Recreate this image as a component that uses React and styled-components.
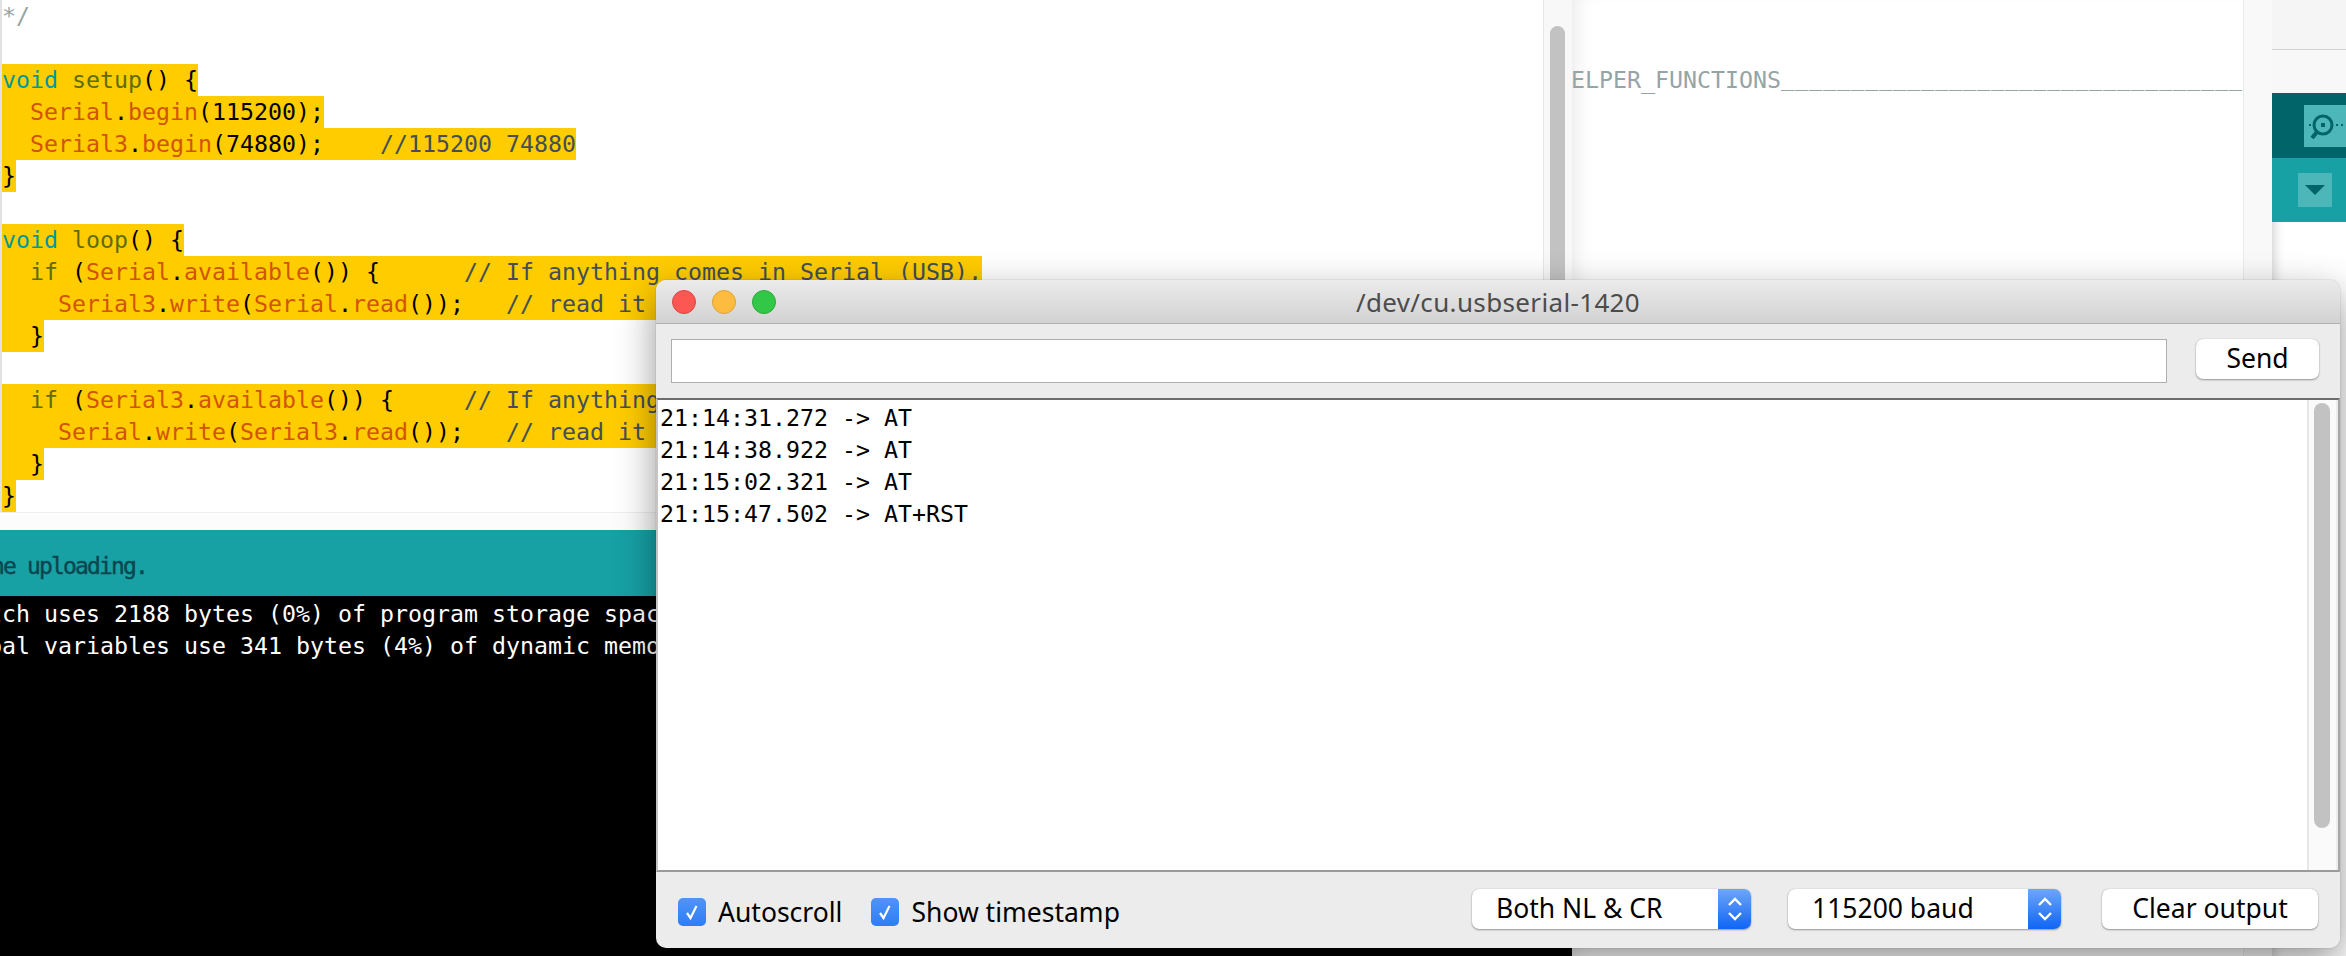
import styled, { createGlobalStyle } from "styled-components";

const Global = createGlobalStyle`
  html, body {
    margin: 0;
    padding: 0;
    background: #fff;
  }
`;

const MONO = `"DejaVu Sans Mono", "Liberation Mono", monospace`;
const UI = `"Noto Sans", "Open Sans", sans-serif`;

const Desktop = styled.div`
  position: relative;
  display: flex;
  width: 2346px;
  height: 956px;
  overflow: hidden;
  background: #fff;
`;

// left part of the IDE
const IdeColumn = styled.div`
  width: 1572px;
  flex-shrink: 0;
  display: flex;
  flex-direction: column;
`;

const EditorRow = styled.div`
  display: flex;
  height: 512px;
  flex-shrink: 0;
  border-bottom: 1px solid #eeeeee;
`;

const CodeArea = styled.div`
  flex: 1;
  min-width: 0;
  overflow: hidden;
  border-left: 2px solid #e2e2e2;
  font-family: ${MONO};
  font-size: 23.25px;
  line-height: 32px;
  color: #000;
`;

const Line = styled.div`
  width: fit-content;
  height: 32px;
  white-space: pre;
  background: ${(p) => (p.$on ? "#ffcc00" : "transparent")};
`;

const Kw = styled.span`
  color: #00979c;
`;
const Fn = styled.span`
  color: #5e6d03;
`;
const Obj = styled.span`
  color: #d35400;
`;
const Cm = styled.span`
  color: #434f54;
`;
const GreyCm = styled.span`
  color: #95a5a6;
`;

const ScrollGutter = styled.div`
  width: 29px;
  flex-shrink: 0;
  box-sizing: border-box;
  background: #f8f8f8;
  border-left: 1px solid #e6e6e6;
  padding: 26px 7px 0 6px;
`;

const ScrollThumb = styled.div`
  height: 700px;
  background: #c2c2c2;
  border-radius: 8px;
`;

const EditorFoot = styled.div`
  height: 17px;
  flex-shrink: 0;
  background: #fcfcfc;
`;

const StatusBar = styled.div`
  height: 66px;
  flex-shrink: 0;
  display: flex;
  align-items: center;
  overflow: hidden;
  background: #17a1a5;
  color: #0a4650;
  font-family: ${MONO};
  font-size: 23px;
  letter-spacing: -1.85px;
  white-space: pre;
`;

const StatusText = styled.div`
  margin: 6px 0 0 -33px;
  -webkit-text-stroke: 0.4px #0a4650;
`;

const Console = styled.div`
  flex: 1;
  background: #000;
  color: #fff;
  padding-top: 2px;
  overflow: hidden;
  font-family: ${MONO};
  font-size: 23.25px;
  line-height: 32px;
  white-space: pre;
`;

const ConsoleLine = styled.div`
  margin-left: -54px;
`;

// second editor window between the two IDE parts
const MidPane = styled.div`
  width: 700px;
  flex-shrink: 0;
  display: flex;
  background: #fff;
  box-shadow: inset 16px 0 22px -16px rgba(0, 0, 0, 0.12);
`;

const MidCode = styled.div`
  width: 671px;
  flex-shrink: 0;
  padding-top: 64px;
  overflow: hidden;
  font-family: ${MONO};
  font-size: 23.25px;
  line-height: 32px;
  white-space: pre;
`;

const MidText = styled.div`
  margin-left: -1px;
`;

const Rule = styled.span`
  font-size: 21.6px;
  letter-spacing: 1px;
  line-height: 1;
  vertical-align: 2px;
`;

const MidGutter = styled.div`
  flex: 1;
  background: #f9f9f9;
  border-left: 1px solid #ececec;
`;

const RightColumn = styled.div`
  flex: 1;
  display: flex;
  flex-direction: column;
  box-shadow: inset 12px 0 12px -10px rgba(0, 0, 0, 0.2);
`;

const TopBand = styled.div`
  height: 50px;
  background: #f5f5f5;
  border-bottom: 1px solid #d2d2d2;
  box-sizing: border-box;
`;

const TabBand = styled.div`
  height: 43px;
  background: #f8f8f8;
`;

const ToolBand = styled.div`
  height: 65px;
  display: flex;
  align-items: center;
  padding-left: 32px;
  background: #006468;
`;

const MonitorBtn = styled.div`
  width: 42px;
  height: 42px;
  flex-shrink: 0;
  display: flex;
  align-items: center;
  justify-content: center;
  background: #4db6b8;
`;

const TabsBand = styled.div`
  height: 64px;
  display: flex;
  align-items: center;
  padding-left: 26px;
  background: #17a1a5;
`;

const MenuBtn = styled.div`
  width: 34px;
  height: 34px;
  display: flex;
  align-items: center;
  justify-content: center;
  background: #4db6b8;
`;

// serial monitor, floating window
const SerialWindow = styled.div`
  position: absolute;
  left: 656px;
  top: 280px;
  width: 1684px;
  height: 668px;
  display: flex;
  flex-direction: column;
  border-radius: 10px;
  overflow: hidden;
  background: #ececec;
  font-family: ${UI};
`;

const WindowShadow = styled.div`
  position: absolute;
  left: 656px;
  top: 280px;
  width: 1684px;
  height: 668px;
  border-radius: 10px;
  box-shadow: 0 14px 38px rgba(0, 0, 0, 0.42), 0 0 1px rgba(0, 0, 0, 0.5);
`;

const TitleBar = styled.div`
  position: relative;
  height: 44px;
  flex-shrink: 0;
  box-sizing: border-box;
  display: flex;
  align-items: center;
  justify-content: center;
  background: linear-gradient(#ebebeb, #d2d2d2);
  border-bottom: 1px solid #b0b0b0;
  color: #4c4c4c;
  font-size: 26px;
  letter-spacing: 0.35px;
`;

const Lights = styled.div`
  position: absolute;
  left: 16px;
  top: 10px;
  display: flex;
  gap: 16px;
`;

const Light = styled.div`
  width: 24px;
  height: 24px;
  box-sizing: border-box;
  border-radius: 50%;
  background: ${(p) => p.$color};
  border: 1px solid ${(p) => p.$edge};
`;

const SendRow = styled.div`
  height: 74px;
  flex-shrink: 0;
  box-sizing: border-box;
  display: flex;
  gap: 29px;
  padding: 15px 21px 0 15px;
`;

const SendInput = styled.div`
  width: 1496px;
  height: 44px;
  box-sizing: border-box;
  background: #fff;
  border: 1px solid #aeaeae;
`;

const PushButton = styled.div`
  height: ${(p) => p.$h}px;
  width: ${(p) => p.$w}px;
  margin-bottom: ${(p) => p.$lift || 0}px;
  flex-shrink: 0;
  box-sizing: border-box;
  display: flex;
  align-items: center;
  justify-content: center;
  padding-bottom: 3px;
  background: #fff;
  border-radius: 7px;
  box-shadow: 0 1px 2px rgba(0, 0, 0, 0.35), 0 0 1px rgba(0, 0, 0, 0.3);
  color: #000;
  font-size: 26.5px;
`;

const OutputPane = styled.div`
  flex: 1;
  min-height: 0;
  display: flex;
  background: #fff;
  border-top: 2px solid #6c6c6c;
  border-bottom: 2px solid #9a9a9a;
  border-left: 2px solid #c4c4c4;
  border-right: 2px solid #a6a6a6;
`;

const OutputText = styled.div`
  flex: 1;
  padding: 2px 0 0 2px;
  font-family: ${MONO};
  font-size: 23.25px;
  line-height: 32px;
  color: #000;
  white-space: pre;
`;

const OutputGutter = styled.div`
  width: 31px;
  flex-shrink: 0;
  box-sizing: border-box;
  padding: 3px 6px 0 5px;
  background: #fafafa;
  border-left: 2px solid #e8e8e8;
  border-right: 2px solid #ececec;
`;

const OutputThumb = styled.div`
  height: 425px;
  background: #c2c2c2;
  border-radius: 8px;
`;

const Footer = styled.div`
  height: 76px;
  flex-shrink: 0;
  box-sizing: border-box;
  display: flex;
  align-items: center;
  padding: 0 22px 0 22px;
  color: #000;
  font-size: 26.5px;
`;

const CheckLabel = styled.div`
  display: flex;
  align-items: center;
  gap: 12px;
  margin: 4px 29px 0 0;
`;

const CheckBox = styled.div`
  width: 28px;
  height: 28px;
  border-radius: 5px;
  display: flex;
  align-items: center;
  justify-content: center;
  background: linear-gradient(#4f94f8, #2f7cf5);
`;

const Spacer = styled.div`
  flex: 1;
`;

const Select = styled.div`
  width: ${(p) => p.$w}px;
  height: 40px;
  margin: 0 ${(p) => p.$gap}px 2px 0;
  flex-shrink: 0;
  display: flex;
  background: #fff;
  border-radius: 7px;
  overflow: hidden;
  box-shadow: 0 1px 2px rgba(0, 0, 0, 0.35), 0 0 1px rgba(0, 0, 0, 0.3);
`;

const SelectText = styled.div`
  flex: 1;
  padding: 0 0 3px 24px;
  display: flex;
  align-items: center;
`;

const SelectArrow = styled.div`
  width: 33px;
  display: flex;
  align-items: center;
  justify-content: center;
  background: linear-gradient(#6ea6f9, #0f65f5);
`;

const Check = () => (
  <svg width="18" height="18" viewBox="0 0 18 18" fill="none">
    <path d="M4 10l3.5 5L13.5 3" stroke="#fff" strokeWidth="2.2" />
  </svg>
);

const Updown = () => (
  <svg width="20" height="28" viewBox="0 0 20 28" fill="none">
    <path d="M4 10l6-6 6 6M4 18l6 6 6-6" stroke="#fff" strokeWidth="2.4" />
  </svg>
);

const MonitorIcon = () => (
  <svg width="42" height="42" viewBox="0 0 42 42" fill="none">
    <circle cx="19" cy="20" r="9" stroke="#006468" strokeWidth="3" />
    <rect x="17" y="18" width="4" height="4" fill="#006468" />
    <path d="M13 27l-5 6" stroke="#006468" strokeWidth="4" />
    <rect x="5" y="19" width="2" height="2" fill="#006468" />
    <rect x="32" y="19" width="2" height="2" fill="#006468" />
    <rect x="37" y="19" width="2" height="2" fill="#006468" />
  </svg>
);

const DownTriangle = () => (
  <svg width="20" height="10" viewBox="0 0 20 10">
    <path d="M0 0h20L10 10z" fill="#006468" />
  </svg>
);

const App = () => {
  return (
    <Desktop>
      <Global />
      <IdeColumn>
        <EditorRow>
          <CodeArea>
            <Line><GreyCm>*/</GreyCm></Line>
            <Line />
            <Line $on><Kw>void</Kw> <Fn>setup</Fn>() {"{"}</Line>
            <Line $on>  <Obj>Serial</Obj>.<Obj>begin</Obj>(115200);</Line>
            <Line $on>  <Obj>Serial3</Obj>.<Obj>begin</Obj>(74880);    <Cm>//115200 74880</Cm></Line>
            <Line $on>{"}"}</Line>
            <Line />
            <Line $on><Kw>void</Kw> <Fn>loop</Fn>() {"{"}</Line>
            <Line $on>  <Fn>if</Fn> (<Obj>Serial</Obj>.<Obj>available</Obj>()) {"{"}      <Cm>// If anything comes in Serial (USB),</Cm></Line>
            <Line $on>    <Obj>Serial3</Obj>.<Obj>write</Obj>(<Obj>Serial</Obj>.<Obj>read</Obj>());   <Cm>// read it and send it out Serial3 (pins 0 &amp; 1)</Cm></Line>
            <Line $on>  {"}"}</Line>
            <Line />
            <Line $on>  <Fn>if</Fn> (<Obj>Serial3</Obj>.<Obj>available</Obj>()) {"{"}     <Cm>// If anything comes in Serial3 (pins 0 &amp; 1)</Cm></Line>
            <Line $on>    <Obj>Serial</Obj>.<Obj>write</Obj>(<Obj>Serial3</Obj>.<Obj>read</Obj>());   <Cm>// read it and send it out Serial (USB)</Cm></Line>
            <Line $on>  {"}"}</Line>
            <Line $on>{"}"}</Line>
          </CodeArea>
          <ScrollGutter>
            <ScrollThumb />
          </ScrollGutter>
        </EditorRow>
        <EditorFoot />
        <StatusBar>
          <StatusText>Done uploading.</StatusText>
        </StatusBar>
        <Console>
          <ConsoleLine>Sketch uses 2188 bytes (0%) of program storage space. Maximum is 253952 bytes.</ConsoleLine>
          <ConsoleLine>Global variables use 341 bytes (4%) of dynamic memory, leaving 7851 bytes for local variables.</ConsoleLine>
        </Console>
      </IdeColumn>

      <MidPane>
        <MidCode>
          <MidText>
            <GreyCm>ELPER_FUNCTIONS<Rule>_________________________________</Rule></GreyCm>
          </MidText>
        </MidCode>
        <MidGutter />
      </MidPane>

      <RightColumn>
        <TopBand />
        <TabBand />
        <ToolBand>
          <MonitorBtn>
            <MonitorIcon />
          </MonitorBtn>
        </ToolBand>
        <TabsBand>
          <MenuBtn>
            <DownTriangle />
          </MenuBtn>
        </TabsBand>
      </RightColumn>

      <WindowShadow />
      <SerialWindow>
        <TitleBar>
          <Lights>
            <Light $color="#fc5753" $edge="#e0443e" />
            <Light $color="#fdbc40" $edge="#dea034" />
            <Light $color="#33c748" $edge="#27aa35" />
          </Lights>
          /dev/cu.usbserial-1420
        </TitleBar>
        <SendRow>
          <SendInput />
          <PushButton $w={123} $h={40}>Send</PushButton>
        </SendRow>
        <OutputPane>
          <OutputText>
            <div>21:14:31.272 -&gt; AT</div>
            <div>21:14:38.922 -&gt; AT</div>
            <div>21:15:02.321 -&gt; AT</div>
            <div>21:15:47.502 -&gt; AT+RST</div>
          </OutputText>
          <OutputGutter>
            <OutputThumb />
          </OutputGutter>
        </OutputPane>
        <Footer>
          <CheckLabel>
            <CheckBox><Check /></CheckBox>
            Autoscroll
          </CheckLabel>
          <CheckLabel>
            <CheckBox><Check /></CheckBox>
            Show timestamp
          </CheckLabel>
          <Spacer />
          <Select $w={279} $gap={37}>
            <SelectText>Both NL &amp; CR</SelectText>
            <SelectArrow><Updown /></SelectArrow>
          </Select>
          <Select $w={273} $gap={41}>
            <SelectText>115200 baud</SelectText>
            <SelectArrow><Updown /></SelectArrow>
          </Select>
          <PushButton $w={216} $h={40} $lift={2}>Clear output</PushButton>
        </Footer>
      </SerialWindow>
    </Desktop>
  );
};

export default App;
